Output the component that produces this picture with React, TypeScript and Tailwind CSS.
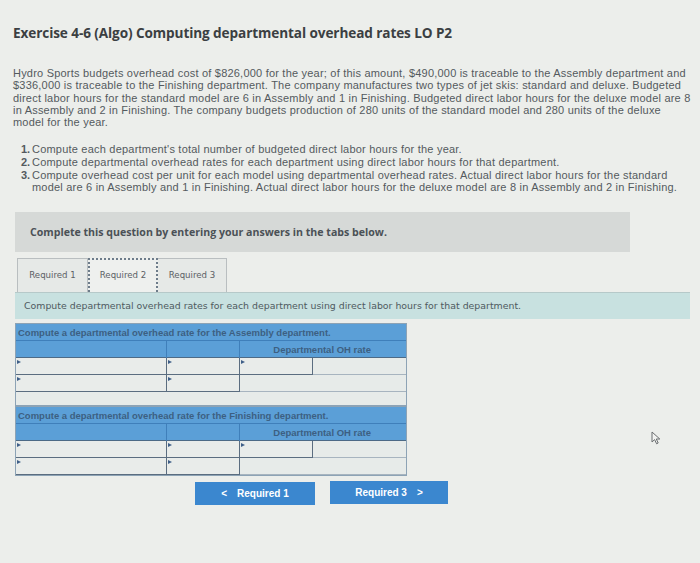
import React from "react"

const Marker = () => (
  <span className="absolute left-[1px] top-[2px] h-0 w-0 border-y-[2.5px] border-l-[4px] border-y-transparent border-l-[#3f5f88]" />
)

const InputCell = ({ right = true }: { right?: boolean }) => (
  <div className={`relative h-full border-b-[1.5px] border-[#5b6d80] bg-[#e9ecea] ${right ? "border-r-[1.5px]" : ""}`}>
    <Marker />
  </div>
)

const DeptTable = ({ dept, blankRow }: { dept: string; blankRow?: boolean }) => (
  <div className="w-[392px] border border-[#8da3b5] bg-[#e7ebe9]">
    <div className="h-[17px] border-b border-[#3f7fba] bg-[#5b9fd7] pl-[2px] text-[9.5px] font-bold leading-[17px] text-[#3d5f82]">
      Compute a departmental overhead rate for the {dept} department.
    </div>
    <div className="grid h-[17px] grid-cols-[151px_73px_73px_1fr] border-b-[1.5px] border-[#4d6a86] bg-[#5b9fd7] text-[9.5px] font-bold leading-[17px] text-[#3d5f82]">
      <div className="border-r border-[#3f7fba]" />
      <div className="border-r border-[#3f7fba]" />
      <div className="col-span-2 pr-[35px] text-right">Departmental OH rate</div>
    </div>
    <div className="grid h-[17px] grid-cols-[151px_73px_73px_1fr]">
      <InputCell />
      <InputCell />
      <InputCell />
      <div className="border-b-[1.5px] border-[#a7b4bf]" />
    </div>
    <div className="grid h-[17px] grid-cols-[151px_73px_1fr]">
      <InputCell />
      <InputCell />
      <div className="border-b border-[#a7b4bf]" />
    </div>
    {blankRow && <div className="h-[13px]" />}
  </div>
)

const Cursor = () => (
  <svg className="absolute left-[651px] top-[431px]" width="10" height="14" viewBox="0 0 10 14">
    <path d="M1 1 L1 11 L3.6 8.6 L5.6 12.8 L7.2 12 L5.3 8 L8.8 8 Z" fill="#f2f3f1" stroke="#6b6e70" strokeWidth="1" strokeLinejoin="round" />
  </svg>
)

const paragraph = [
  "Hydro Sports budgets overhead cost of $826,000 for the year; of this amount, $490,000 is traceable to the Assembly department and",
  "$336,000 is traceable to the Finishing department. The company manufactures two types of jet skis: standard and deluxe. Budgeted",
  "direct labor hours for the standard model are 6 in Assembly and 1 in Finishing. Budgeted direct labor hours for the deluxe model are 8",
  "in Assembly and 2 in Finishing. The company budgets production of 280 units of the standard model and 280 units of the deluxe",
  "model for the year.",
]

export default function App() {
  return (
    <div className="relative h-[563px] w-[700px] overflow-hidden bg-[#eceeeb] font-['Liberation_Sans',Arial,sans-serif] text-[#545a5e]">
      <div className="pl-[13px] pt-[25px]">
        <h1 className="font-['Open_Sans',sans-serif] text-[13.6px] font-bold leading-[16px] tracking-[-0.1px] text-[#3b3f42]">
          Exercise 4-6 (Algo) Computing departmental overhead rates LO P2
        </h1>
        <p className="mt-[26px] text-[11px] leading-[12.3px] tracking-[0.21px]">
          {paragraph.map((l, i) => (
            <span key={i} className="block whitespace-nowrap">{l}</span>
          ))}
        </p>
        <ol className="mt-[15px] pl-[8px] text-[11px] leading-[12.6px] tracking-[0.21px]">
          <li className="flex whitespace-nowrap"><span className="w-[11px] shrink-0 font-bold tracking-normal">1.</span><span>Compute each department's total number of budgeted direct labor hours for the year.</span></li>
          <li className="flex whitespace-nowrap"><span className="w-[11px] shrink-0 font-bold tracking-normal">2.</span><span>Compute departmental overhead rates for each department using direct labor hours for that department.</span></li>
          <li className="flex whitespace-nowrap"><span className="w-[11px] shrink-0 font-bold tracking-normal">3.</span>
            <span>
              <span className="block">Compute overhead cost per unit for each model using departmental overhead rates. Actual direct labor hours for the standard</span>
              <span className="block">model are 6 in Assembly and 1 in Finishing. Actual direct labor hours for the deluxe model are 8 in Assembly and 2 in Finishing.</span>
            </span>
          </li>
        </ol>
      </div>

      <div className="ml-[15px] mt-[18px] h-[40px] w-[615px] bg-[#d6d9d7] pl-[15px] font-['Open_Sans',sans-serif] text-[10.6px] font-bold leading-[40px] text-[#4b5156]">
        Complete this question by entering your answers in the tabs below.
      </div>

      <div className="ml-[17px] mt-[6px] flex h-[34px] font-['DejaVu_Sans',Verdana,sans-serif] text-[8.6px] text-[#5b6065]">
        <div className="flex w-[71px] items-center justify-center border border-b-0 border-[#b9bec0] bg-[#e6e9e7]">Required 1</div>
        <div className="flex w-[70px] items-center justify-center border-2 border-b-0 border-dotted border-[#6d7c8a] bg-[#eef0ee]">Required 2</div>
        <div className="flex w-[69px] items-center justify-center border border-b-0 border-l-0 border-[#b9bec0] bg-[#e6e9e7]">Required 3</div>
      </div>

      <div className="ml-[15px] h-[27px] w-[675px] border-t border-[#b6c9c9] bg-[#c8e1e0] pl-[9px] font-['DejaVu_Sans',Verdana,sans-serif] text-[9.4px] leading-[26px] text-[#4f5a5f]">
        Compute departmental overhead rates for each department using direct labor hours for that department.
      </div>

      <div className="ml-[15px] mt-[4px]">
        <DeptTable dept="Assembly" blankRow />
        <DeptTable dept="Finishing" />
      </div>

      <div className="ml-[195px] mt-[5px] flex items-start gap-[15px] text-[10px] font-bold text-white">
        <div className="mt-[1px] flex h-[23px] w-[120px] items-center justify-center gap-[10px] bg-[#3b87cf]">
          <span className="text-[10px]">&lt;</span>
          <span>Required 1</span>
        </div>
        <div className="flex h-[23px] w-[118px] items-center justify-center gap-[10px] bg-[#3b87cf]">
          <span>Required 3</span>
          <span className="text-[10px]">&gt;</span>
        </div>
      </div>

      <Cursor />
    </div>
  )
}
